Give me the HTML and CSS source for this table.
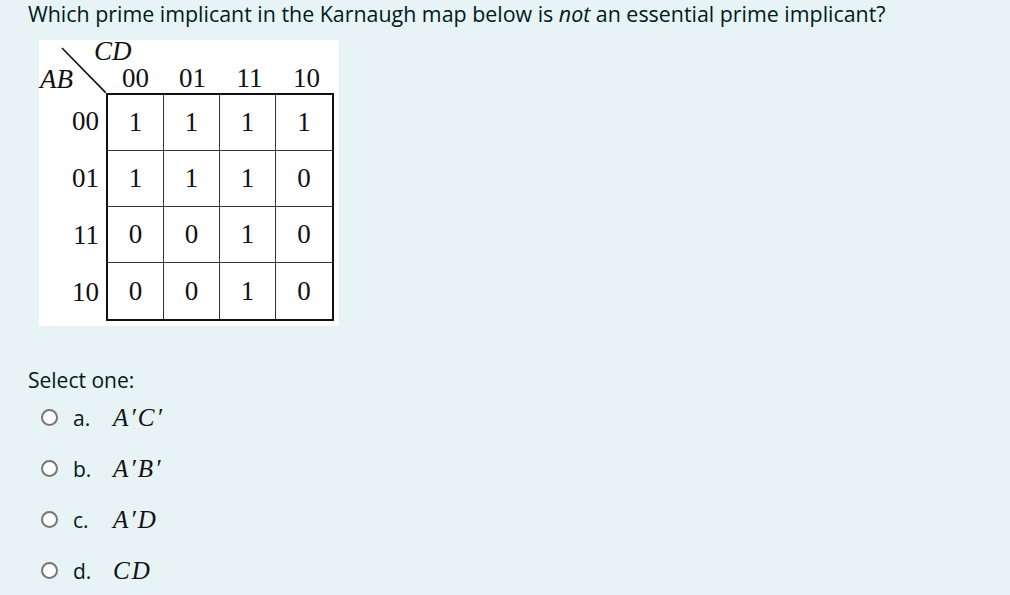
FILE: index.html
```html
<!DOCTYPE html>
<html>
<head>
<meta charset="utf-8">
<link rel="stylesheet" href="styles.css">
</head>
<body>
<div class="page">
  <p class="question">Which prime implicant in the Karnaugh map below is <em>not</em> an essential prime implicant?</p>
  <div class="kmap">
    <div class="corner">
      <svg class="diag" width="67" height="53" viewBox="0 0 67 53"><line x1="23" y1="8" x2="67" y2="53" stroke="#111" stroke-width="1.6"/></svg>
      <span class="cd">CD</span>
      <span class="ab">AB</span>
    </div>
    <div class="colh">00</div><div class="colh">01</div><div class="colh">11</div><div class="colh">10</div>
    <div class="rowh">00</div>
    <div class="cells">
      <div class="c">1</div><div class="c">1</div><div class="c">1</div><div class="c">1</div>
      <div class="c">1</div><div class="c">1</div><div class="c">1</div><div class="c">0</div>
      <div class="c">0</div><div class="c">0</div><div class="c">1</div><div class="c">0</div>
      <div class="c">0</div><div class="c">0</div><div class="c">1</div><div class="c">0</div>
    </div>
    <div class="rowh">01</div>
    <div class="rowh">11</div>
    <div class="rowh">10</div>
  </div>
  <p class="select">Select one:</p>
  <div class="options">
    <label class="opt"><span class="radio"></span><span class="letter">a.</span><span class="math">A′C′</span></label>
    <label class="opt"><span class="radio"></span><span class="letter">b.</span><span class="math">A′B′</span></label>
    <label class="opt"><span class="radio"></span><span class="letter">c.</span><span class="math">A′D</span></label>
    <label class="opt"><span class="radio"></span><span class="letter">d.</span><span class="math">CD</span></label>
  </div>
</div>
</body>
</html>
```
FILE: styles.css
```css
html, body {
  margin: 0;
  padding: 0;
  background: #e7f3f5;
}
.page {
  padding: 0 0 0 28px;
  font-family: "Open Sans", "Noto Sans", sans-serif;
  color: #001a1e;
  font-size: 21px;
}
.question {
  margin: 0;
  line-height: 28px;
  font-size: 21.4px;
}
.question em { font-style: italic; }
.kmap {
  margin: 12px 0 0 11px;
  width: 300px;
  height: 286px;
  background: #fff;
  display: grid;
  grid-template-columns: 67px 57px 57px 57px 57px 5px;
  grid-template-rows: 53px 57px 57px 57px 57px 5px;
  font-family: "Liberation Serif", "Times New Roman", serif;
  color: #111;
  font-size: 27px;
  box-sizing: border-box;
}
.corner {
  position: relative;
  grid-column: 1;
  grid-row: 1;
}
.diag { position: absolute; left: 0; top: 0; }
.cd {
  position: absolute;
  left: 55px;
  top: -4px;
  font-style: italic;
  font-size: 27px;
  line-height: 30px;
}
.ab {
  position: absolute;
  left: 1px;
  top: 24px;
  font-style: italic;
  font-size: 27px;
  line-height: 30px;
}
.colh {
  grid-row: 1;
  display: flex;
  align-items: flex-end;
  justify-content: center;
  line-height: 30px;
  padding-left: 2px;
}
.colh:nth-child(2) { grid-column: 2; }
.colh:nth-child(3) { grid-column: 3; }
.colh:nth-child(4) { grid-column: 4; }
.colh:nth-child(5) { grid-column: 5; }
.rowh {
  grid-column: 1;
  display: flex;
  align-items: center;
  justify-content: flex-end;
  padding-right: 7px;
}
.rowh:nth-of-type(1) { grid-row: 2; }
.cells {
  grid-column: 2 / 6;
  grid-row: 2 / 6;
  display: grid;
  grid-template-columns: repeat(4, 1fr);
  grid-template-rows: repeat(4, 1fr);
  border: 2px solid #111;
  box-sizing: border-box;
}
.c {
  display: flex;
  align-items: center;
  justify-content: center;
  border-right: 1px solid #333;
  border-bottom: 1px solid #333;
}
.c:nth-child(4n) { border-right: none; }
.c:nth-child(n+13) { border-bottom: none; }
.select {
  margin: 40px 0 0 0;
  line-height: 28px;
}
.options {
  display: flex;
  flex-direction: column;
  margin-top: -2px;
}
.opt {
  display: flex;
  align-items: center;
  height: 51px;
  margin-left: 13px;
}
.radio {
  width: 13px;
  height: 13px;
  border: 2px solid #767676;
  border-radius: 50%;
  background: #fff;
  margin-right: 15px;
}
.letter {
  width: 40px;
}
.math {
  font-family: "Liberation Serif", "Times New Roman", serif;
  font-style: italic;
  font-size: 25px;
  letter-spacing: 2px;
  color: #111;
}
```
